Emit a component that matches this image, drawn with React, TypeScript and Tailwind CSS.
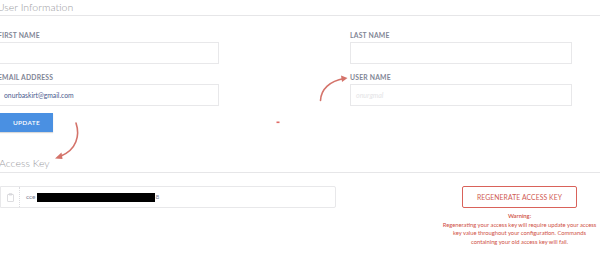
import React from "react";

function Label({ children }: { children: React.ReactNode }) {
  return (
    <div className="h-[10px] text-[6.8px] leading-[10px] font-bold tracking-[0.2px] text-[#7f8595]">
      {children}
    </div>
  );
}

function Field({
  label,
  value,
  placeholder,
  className,
}: {
  label: string;
  value?: string;
  placeholder?: string;
  className?: string;
}) {
  return (
    <div className={className}>
      <Label>{label}</Label>
      <div className="mt-[2px] flex h-[22px] items-center border-[1.5px] border-[#e8e8ea] bg-white px-[5px]">
        {value ? (
          <span className="text-[6.8px] text-[#4a5a8e]">{value}</span>
        ) : placeholder ? (
          <span className="text-[7px] italic text-[#e4e4e6]">{placeholder}</span>
        ) : null}
      </div>
    </div>
  );
}

function ClipboardIcon() {
  return (
    <svg width="7" height="9" viewBox="0 0 7 9" fill="none">
      <rect x="0.5" y="1.5" width="6" height="7" rx="0.5" stroke="#d4d4d8" strokeWidth="0.8" />
      <rect x="2" y="0.5" width="3" height="1.6" rx="0.4" stroke="#d4d4d8" strokeWidth="0.7" />
    </svg>
  );
}

export default function App() {
  return (
    <div
      className="relative h-[259px] w-[600px] overflow-hidden bg-white"
      style={{ fontFamily: "Lato, 'Open Sans', sans-serif" }}
    >
      {/* user information */}
      <div className="ml-[-3px] h-[15px] text-[10.5px] font-light leading-[14px] text-[#9a9aa0]">
        User Information
      </div>
      <div className="h-px bg-[#e6e6e8]" />

      <div className="mt-[14px] flex">
        <div className="w-[219px]">
          <Field label="FIRST NAME" className="ml-[-2px] w-[221px]" />
          <Field label="EMAIL ADDRESS" value="onurbaskirt@gmail.com" className="ml-[-2px] mt-[8px] w-[221px]" />
          <button className="mt-[7px] flex h-[19px] w-[53px] items-center justify-center bg-[#4a90e2] text-[6.5px] font-semibold tracking-[0.3px] text-white shadow-[0_1px_1px_rgba(0,0,0,0.15)]">
            UPDATE
          </button>
        </div>
        <div className="ml-[131px] w-[222px]">
          <Field label="LAST NAME" />
          <Field label="USER NAME" placeholder="onurgmal" className="mt-[8px]" />
        </div>
      </div>

      {/* access key */}
      <div className="mt-[24px] ml-[-1px] h-[14px] text-[10.5px] font-light leading-[14px] text-[#9a9aa0]">
        Access Key
      </div>
      <div className="mt-[2px] h-px bg-[#e6e6e8]" />

      <div className="mt-[13px] flex items-start">
        <div className="flex h-[22px] w-[336px] items-stretch rounded-r-[2px] border-[1.5px] border-[#e8e8ea]">
          <div className="flex w-[19px] items-center justify-center border-r border-dotted border-[#dcdce0]">
            <ClipboardIcon />
          </div>
          <div className="flex items-center pl-[6px] text-[6.5px] text-[#7d8496]">
            <span>cce</span>
            <span className="ml-[1px] h-[9px] w-[118px] bg-black" />
            <span className="ml-[1px]">8</span>
          </div>
        </div>

        <div className="ml-[126px] flex w-[115px] flex-col items-center">
          <button className="flex h-[22px] w-[115px] items-center justify-center rounded-[2px] border border-[#d9625a] text-[6.8px] tracking-[0.1px] text-[#cf5a52]">
            REGENERATE ACCESS KEY
          </button>
          <div className="mt-[4px] flex flex-col items-center whitespace-nowrap text-center text-[5.8px] leading-[8.5px] text-[#cf4f45]">
            <div className="font-semibold">Warning:</div>
            <div>Regenerating your access key will require update your access</div>
            <div>key value throughout your configuration. Commands</div>
            <div>containing your old access key will fail.</div>
          </div>
        </div>
      </div>

      {/* annotation arrows */}
      <svg className="absolute left-0 top-0" width="600" height="259" viewBox="0 0 600 259" fill="none">
        <path d="M320.5 100.5 C321 89 330 81 344 78.5" stroke="#d4736a" strokeWidth="1.6" strokeLinecap="round" />
        <path d="M341 75.5 L347.5 78 L342 82" fill="#d4736a" />
        <path d="M76 123 C80 135 77 150 60 156.5" stroke="#d4736a" strokeWidth="1.6" strokeLinecap="round" />
        <path d="M55 158.5 L61.5 152.5 L62.5 159 Z" fill="#d4736a" />
        <rect x="276.5" y="121.5" width="3" height="1.6" fill="#e06b66" />
      </svg>
    </div>
  );
}
